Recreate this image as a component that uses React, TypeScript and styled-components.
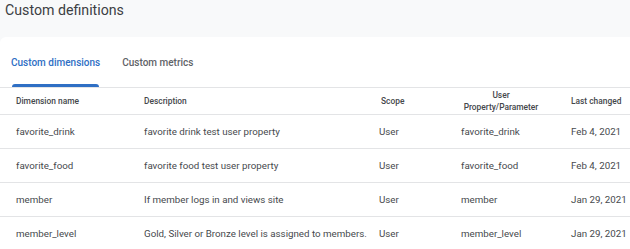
import React from 'react';
import styled, { createGlobalStyle } from 'styled-components';

type Definition = {
  name: string;
  description: string;
  scope: string;
  parameter: string;
  changed: string;
};

const rows: Definition[] = [
  {
    name: 'favorite_drink',
    description: 'favorite drink test user property',
    scope: 'User',
    parameter: 'favorite_drink',
    changed: 'Feb 4, 2021',
  },
  {
    name: 'favorite_food',
    description: 'favorite food test user property',
    scope: 'User',
    parameter: 'favorite_food',
    changed: 'Feb 4, 2021',
  },
  {
    name: 'member',
    description: 'If member logs in and views site',
    scope: 'User',
    parameter: 'member',
    changed: 'Jan 29, 2021',
  },
  {
    name: 'member_level',
    description: 'Gold, Silver or Bronze level is assigned to members.',
    scope: 'User',
    parameter: 'member_level',
    changed: 'Jan 29, 2021',
  },
];

const GlobalStyle = createGlobalStyle`
  html, body {
    margin: 0;
    padding: 0;
    background: #f8f9fa;
    font-family: Roboto, "Liberation Sans", Arial, sans-serif;
    overflow: hidden;
  }
`;

const Page = styled.div`
  width: 630px;
  height: 249px;
  overflow: hidden;
  background: #f8f9fa;
`;

const TitleBar = styled.header`
  height: 37px;
  padding: 2px 5px 0;
  box-sizing: border-box;
`;

const Title = styled.h1`
  margin: 0;
  font-size: 14.2px;
  font-weight: 400;
  line-height: 16px;
  color: #3c4043;
`;

const Card = styled.section`
  background: #fff;
  border-top-left-radius: 6px;
  height: 212px;
`;

const TabBar = styled.nav`
  display: flex;
  align-items: flex-end;
  height: 51px;
  box-sizing: border-box;
  border-bottom: 1px solid #e3e4e6;
`;

const Tab = styled.div<{ $active?: boolean }>`
  display: flex;
  flex-direction: column;
  align-items: stretch;
  height: 43px;
  margin-left: 11px;
  margin-right: 11px;
  font-size: 10px;
  font-weight: 500;
  color: ${(p) => (p.$active ? '#2f6fc4' : '#5f6368')};
`;

const TabLabel = styled.span`
  display: flex;
  align-items: center;
  flex: 1;
  padding-bottom: 3px;
  white-space: nowrap;
`;

const Indicator = styled.span<{ $active?: boolean }>`
  height: 3px;
  margin: 0 1px;
  border-radius: 3px 3px 0 0;
  background: ${(p) => (p.$active ? '#2f6fc4' : 'transparent')};
`;

const Grid = styled.div`
  display: grid;
  grid-template-columns: 128px 235px 82px 110px 1fr;
  padding-left: 16px;
  align-items: center;
  border-bottom: 1px solid #e3e4e6;
`;

const HeadRow = styled(Grid)`
  height: 27px;
  box-sizing: border-box;
`;

const BodyRow = styled(Grid)`
  height: 34px;
  box-sizing: border-box;
`;

const HeadCell = styled.div<{ $center?: boolean; $shift?: number }>`
  font-size: 8.4px;
  font-weight: 500;
  line-height: 12px;
  color: #44474b;
  white-space: nowrap;
  text-align: ${(p) => (p.$center ? 'center' : 'left')};
  width: ${(p) => (p.$center ? '80px' : 'auto')};
  padding-left: ${(p) => p.$shift ?? 0}px;
`;

const Cell = styled.div`
  font-size: 9.75px;
  line-height: 12px;
  color: #46494d;
  white-space: nowrap;
`;

export default function App() {
  return (
    <Page>
      <GlobalStyle />
      <TitleBar>
        <Title>Custom definitions</Title>
      </TitleBar>
      <Card>
        <TabBar>
          <Tab $active>
            <TabLabel>Custom dimensions</TabLabel>
            <Indicator $active />
          </Tab>
          <Tab>
            <TabLabel>Custom metrics</TabLabel>
            <Indicator />
          </Tab>
        </TabBar>
        <HeadRow>
          <HeadCell>Dimension name</HeadCell>
          <HeadCell>Description</HeadCell>
          <HeadCell $shift={2}>Scope</HeadCell>
          <HeadCell $center>
            User
            <br />
            Property/Parameter
          </HeadCell>
          <HeadCell>Last changed</HeadCell>
        </HeadRow>
        {rows.map((row) => (
          <BodyRow key={row.name}>
            <Cell>{row.name}</Cell>
            <Cell>{row.description}</Cell>
            <Cell>{row.scope}</Cell>
            <Cell>{row.parameter}</Cell>
            <Cell>{row.changed}</Cell>
          </BodyRow>
        ))}
      </Card>
    </Page>
  );
}
